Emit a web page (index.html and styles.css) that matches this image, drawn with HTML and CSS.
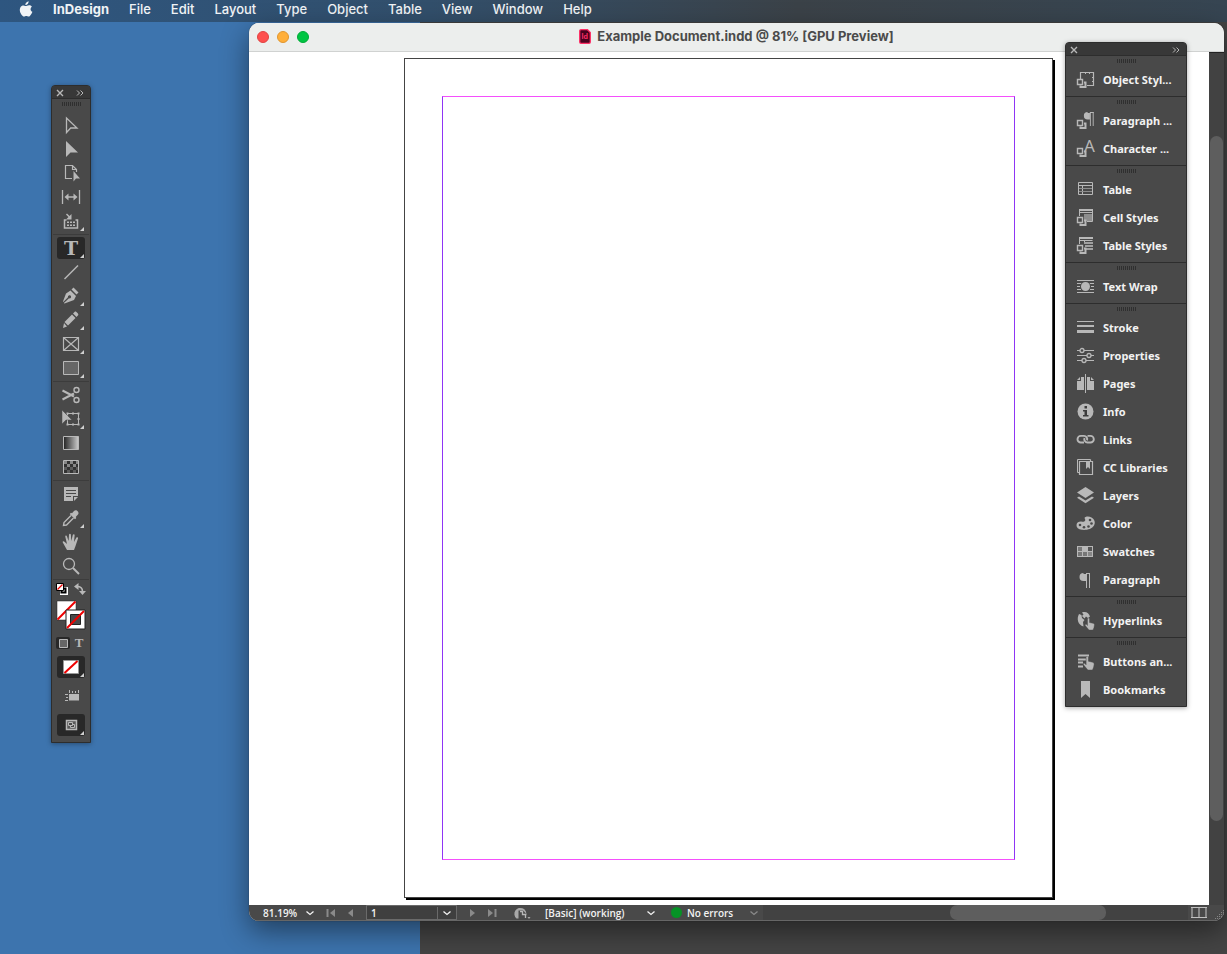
FILE: index.html
```html
<!DOCTYPE html>
<html lang="en">
<head>
    <meta charset="utf-8">
    <title>InDesign</title>
    <link rel="stylesheet" href="styles.css">
</head>
<body>
    <svg class="sprite" aria-hidden="true">
        <symbol id="badge" viewBox="0 0 20 20">
            <path d="M1.5 9.5h5v5h-5z" fill="#494949" stroke="#b8b8b8" stroke-width="1.4"/>
            <path d="M8 12.5h1.5v4.500h-5v-1.500" fill="none" stroke="#b8b8b8" stroke-width="2"/>
        </symbol>
        <symbol id="chevron" viewBox="0 0 10 10">
            <path d="M1.500 3.500l3.500 3 3.500-3" fill="none" stroke="currentColor" stroke-width="1.300"/>
        </symbol>
        <symbol id="close" viewBox="0 0 8 8">
            <path d="M1 1l6 6M7 1l-6 6" fill="none" stroke="currentColor" stroke-width="1.400"/>
        </symbol>
        <symbol id="collapse" viewBox="0 0 8 8">
            <path d="M1 1.500l2.500 2.500-2.500 2.500M4.500 1.500l2.500 2.500-2.500 2.500" fill="none" stroke="currentColor"/>
        </symbol>
        <symbol id="pilcrow" viewBox="0 0 12 15">
            <path d="M4.500 0H11v1H4.500zM4.500 0a4 4 0 0 0 0 8H7V0z" fill="currentColor"/>
            <path d="M7.500 0v15M10.500 0v15" stroke="currentColor"/>
        </symbol>
        <symbol id="hand" viewBox="0 0 10 12">
            <path d="M2.500 1c0-1.300 2-1.300 2 0v3.500l3.500.8c1 .3 1.500.8 1.400 1.800L9 9.500 8 12H4L.3 7.600c-.6-1 .6-1.800 1.300-1l.9.9z" fill="currentColor" stroke="#494949" stroke-width=".4"/>
        </symbol>
    </svg>

    <nav class="menubar">
        <a class="apple" href="#" aria-label="Apple">
            <svg width="14" height="17" viewBox="0 0 14 17"><path d="M9.600.3c.1 1.200-.4 2.100-1 2.800-.6.7-1.400 1.100-2.200 1C6.300 3 6.800 2.100 7.400 1.500 8 .8 8.900.4 9.600.3zM12.900 5.700c-1.900 1.200-1.700 4.200.5 5.100-.5 1.500-1.500 3.200-2.500 4.200-.9.8-1.700.6-2.400.3-.8-.4-1.500-.4-2.400 0-1 .5-1.700.4-2.400-.3C.3 11.700-.2 6.900 2.700 5c1.500-.9 2.600-.5 3.500-.1.600.3 1 .2 1.700-.1 1.800-.8 3.800-.7 5 .9z" fill="currentColor"/></svg>
        </a>
        <a class="app-name" href="#">InDesign</a>
        <a href="#">File</a>
        <a href="#">Edit</a>
        <a href="#">Layout</a>
        <a href="#">Type</a>
        <a href="#">Object</a>
        <a href="#">Table</a>
        <a href="#">View</a>
        <a href="#">Window</a>
        <a href="#">Help</a>
    </nav>

    <main class="window">
        <header class="titlebar">
            <div class="lights">
                <button class="light red" aria-label="Close"></button>
                <button class="light yellow" aria-label="Minimize"></button>
                <button class="light green" aria-label="Zoom"></button>
            </div>
            <h1 class="doc-title">
                <svg width="12" height="15" viewBox="0 0 12 15"><path d="M2 .7h6.500l2.800 2.800V13a1.300 1.300 0 0 1-1.300 1.300H2A1.300 1.300 0 0 1 .7 13V2A1.300 1.300 0 0 1 2 .7z" fill="#49021f" stroke="#ff2e66" stroke-width="1.300"/><text x="2.500" y="10" class="id-mark">Id</text></svg>
                Example Document.indd @ 81% [GPU Preview]
            </h1>
        </header>
        <div class="workspace">
            <div class="canvas">
                <div class="page"><div class="page-margins"></div></div>
            </div>
            <div class="v-scroll"><div class="v-thumb"></div></div>
        </div>
        <footer class="statusbar">
            <div class="status-controls">
                <div class="zoom">
                    <select aria-label="Zoom level"><option>81.19%</option></select>
                    <svg width="10" height="10"><use href="#chevron"/></svg>
                </div>
                <div class="pager">
                    <button class="dim" aria-label="First page"><svg width="10" height="10"><path d="M1.500 1v8" stroke="currentColor" stroke-width="2"/><path d="M9 1v8L4 5z" fill="currentColor"/></svg></button>
                    <button class="dim" aria-label="Previous page"><svg width="10" height="10"><path d="M7 1v8L2 5z" fill="currentColor"/></svg></button>
                    <div class="page-field">
                        <input type="text" value="1" aria-label="Page">
                        <button aria-label="Page list"><svg width="10" height="10"><use href="#chevron"/></svg></button>
                    </div>
                    <button class="dim" aria-label="Next page"><svg width="10" height="10"><path d="M3 1v8l5-4z" fill="currentColor"/></svg></button>
                    <button class="dim" aria-label="Last page"><svg width="10" height="10"><path d="M1 1v8l5-4z" fill="currentColor"/><path d="M8.500 1v8" stroke="currentColor" stroke-width="2"/></svg></button>
                </div>
                <button class="open-as" aria-label="Open"><svg width="18" height="14" viewBox="0 0 18 14"><path d="M6 12.500H3.500A6 6 0 1 1 13 10" fill="#a8a8a8"/><path d="M3.800 11.500A5 5 0 1 1 12.500 9" fill="none" stroke="#a8a8a8" stroke-width="1.500"/><path d="M5.500 4.500h4.500l3 3V13H5.500z" fill="#494949"/><path d="M7 5.500h2.500v3h3v3.500" fill="none" stroke="#b8b8b8" stroke-width="1.300"/><path d="M14.500 11h3L16 13z" fill="#a8a8a8"/></svg></button>
                <div class="profile">
                    <select aria-label="Preflight profile"><option>[Basic] (working)</option></select>
                    <svg width="10" height="10"><use href="#chevron"/></svg>
                </div>
                <div class="errors">
                    <span class="dot"></span>
                    <span class="errors-text">No errors</span>
                    <button class="dim" aria-label="Preflight menu"><svg width="10" height="10"><use href="#chevron"/></svg></button>
                </div>
            </div>
            <div class="h-scroll"><div class="h-thumb"></div></div>
            <button class="split" aria-label="Split layout"><svg width="16" height="11" viewBox="0 0 16 11"><path d="M1 .5v10M8 .5v10M15 .5v10" stroke="#888" stroke-width="2"/><path d="M0 .5h16M0 10.500h16" stroke="#c0c0c0"/></svg></button>
            <svg class="resize" width="11" height="11" viewBox="0 0 11 11"><path d="M10.500 1v10M8.500 3v8M6.500 5v6M4.500 7v4M2.500 9v2" stroke="#858585" stroke-dasharray="1 1"/></svg>
        </footer>
    </main>

    <aside class="tools">
        <div class="panel-head">
            <button aria-label="Close tools"><svg width="8" height="8"><use href="#close"/></svg></button>
            <button aria-label="Expand tools"><svg width="8" height="8"><use href="#collapse"/></svg></button>
        </div>
        <div class="grip"></div>
        <div class="tool-group">
            <button class="tool" aria-label="Selection"><svg width="20" height="20"><path d="M5.500 3v14.500l4.200-4.500h6.300z" fill="none" stroke="currentColor" stroke-width="1.300"/></svg></button>
            <button class="tool" aria-label="Direct Selection"><svg width="20" height="20"><path d="M5 2v16l4.500-4.500H17z" fill="currentColor"/></svg></button>
            <button class="tool" aria-label="Page"><svg width="20" height="20"><path d="M11 15.500H4.500v-13h7l4 4V9M11.500 2.500v4h4" fill="none" stroke="currentColor" stroke-width="1.200"/><path d="M12.500 8v10.500l2.500-3h4z" fill="currentColor"/></svg></button>
            <button class="tool" aria-label="Gap"><svg width="20" height="20"><path d="M1.500 3v14M18.500 3v14" stroke="currentColor" stroke-width="1.300"/><path d="M5 10h10" stroke="currentColor" stroke-width="1.500"/><path d="M7.500 6.500v7L3.500 10zM12.500 6.500v7l4-3.500z" fill="currentColor"/></svg></button>
            <button class="tool more" aria-label="Content Collector"><svg width="20" height="20"><path d="M5.500 9h-2v8h13V9h-2" fill="none" stroke="currentColor" stroke-width="1.500"/><path d="M6 10.500h2V12H6zM9 10.500h2V12H9zM12 10.500h2V12h-2zM6 13.500h2V15H6zM9 13.500h2V15H9zM12 13.500h2V15h-2zM10.500 3v5.500H5z" fill="currentColor"/><path d="M5.500 3l3.500 3.500" stroke="currentColor" stroke-width="1.500"/></svg></button>
        </div>
        <div class="tool-group">
            <button class="tool more active" aria-label="Type"><span class="type-mark">T</span></button>
            <button class="tool" aria-label="Line"><svg width="20" height="20"><path d="M3.500 17L17 3.500" stroke="currentColor" stroke-width="1.500"/></svg></button>
            <button class="tool more" aria-label="Pen"><svg width="20" height="20"><path d="M12.500 1.500l5 5-2 2-5-5z" fill="currentColor"/><path d="M9.500 4.500l5.500 5.500-2 4-9.500 3.500-.6-.6L8 12.300a1.600 1.600 0 1 0-1-1L2.300 16l-.3-.5L5 7.500z" fill="currentColor"/></svg></button>
            <button class="tool more" aria-label="Pencil"><svg width="20" height="20"><path d="M14 1.500c1-.7 4 2.500 3.300 3.500L15.500 7 12 3.500zM11 4.500L14.500 8l-7.500 7.500L3.500 12zM3 13l3 3.500-4 1.500z" fill="currentColor"/></svg></button>
            <button class="tool more" aria-label="Rectangle Frame"><svg width="20" height="20"><path d="M2.500 3.500h15v13h-15zM2.500 3.500l15 13M17.500 3.500l-15 13" fill="none" stroke="currentColor" stroke-width="1.200"/></svg></button>
            <button class="tool more" aria-label="Rectangle"><svg width="20" height="20"><path d="M2.500 3.500h15v13h-15z" fill="#666" stroke="currentColor"/></svg></button>
        </div>
        <div class="tool-group">
            <button class="tool" aria-label="Scissors"><svg width="20" height="20"><path d="M1.500 5.500L13 11.500M1.500 14.500L13 8.500" stroke="currentColor" stroke-width="2"/><circle cx="15.500" cy="5" r="2.500" fill="none" stroke="currentColor" stroke-width="1.400"/><circle cx="15.500" cy="15" r="2.500" fill="none" stroke="currentColor" stroke-width="1.400"/></svg></button>
            <button class="tool more" aria-label="Free Transform"><svg width="20" height="20"><path d="M6.500 4.500h11v11h-11z" fill="none" stroke="currentColor"/><path d="M5.500 3.500h2v2h-2zM11 3.500h2v2h-2zM16.500 3.500h2v2h-2zM5.500 14.500h2v2h-2zM11 14.500h2v2h-2zM16.500 14.500h2v2h-2zM16.500 9h2v2h-2z" fill="currentColor"/><path d="M1 1v14l4-4h6z" fill="#b8b8b8" stroke="#494949" stroke-width=".5"/></svg></button>
            <button class="tool" aria-label="Gradient Swatch"><svg width="20" height="20"><defs><linearGradient id="fade"><stop stop-color="#222"/><stop offset="1" stop-color="#ccc"/></linearGradient></defs><path d="M2.500 3.500h15v13h-15z" fill="url(#fade)" stroke="currentColor"/></svg></button>
            <button class="tool" aria-label="Gradient Feather"><svg width="20" height="20"><path d="M2.500 3.500h15v13h-15z" fill="#333" stroke="currentColor"/><path d="M3 4h3v3H3zM9 4h3v3H9zM15 4h2v3h-2zM6 7h3v3H6zM12 7h3v3h-3z" fill="#888"/><path d="M3 10h3v3H3zM9 10h3v3H9zM15 10h2v3h-2zM6 13h3v3H6zM12 13h3v3h-3z" fill="#5c5c5c"/></svg></button>
        </div>
        <div class="tool-group">
            <button class="tool" aria-label="Note"><svg width="20" height="20"><path d="M3 3h14v9h-5v5H3zM13 13h4l-4 4z" fill="currentColor"/><path d="M5 6.500h10M5 9.500h10M5 12.500h5" stroke="#494949"/></svg></button>
            <button class="tool more" aria-label="Eyedropper"><svg width="20" height="20"><path d="M13 3c2-2.500 6 1 4 3.500L14.700 9l.6 1-1.300 1.300L8.700 6 10 4.700l1 .6z" fill="currentColor"/><path d="M10 7.500l-7 7-.5 3 3-.5 7-7" fill="none" stroke="currentColor" stroke-width="1.400"/></svg></button>
            <button class="tool" aria-label="Hand"><svg width="20" height="20"><path d="M6 18L1.800 10.500c-.5-1.300.9-1.600 1.700-.7L6 12 4.300 4.800c-.2-1.400 1.400-1.600 1.700-.4L7.600 9 8 2.700c.1-1.300 1.800-1.300 1.900 0L10.300 9l1.500-6c.4-1.200 2-.8 1.800.5L13 10l2.300-4.300c.7-1 2.200-.4 1.700.9L14.500 14 13 18z" fill="currentColor"/></svg></button>
            <button class="tool" aria-label="Zoom"><svg width="20" height="20"><circle cx="8" cy="8" r="5.500" fill="none" stroke="currentColor" stroke-width="1.300"/><path d="M12 12l6 6" stroke="currentColor" stroke-width="2"/></svg></button>
        </div>
        <div class="swatch-row">
            <button aria-label="Default fill and stroke"><svg width="12" height="12"><path d="M5.500 5.500h5v5h-5z" fill="#fff" stroke="#fff" stroke-width="3"/><path d="M5.500 5.500h4v4h-4z" fill="#fff" stroke="#000" stroke-width="2"/><path d="M.5.5h7v7h-7z" fill="#fff" stroke="#000"/><path d="M1.500 6.500l5-5" stroke="#e00" stroke-width="1.200"/></svg></button>
            <button aria-label="Swap fill and stroke"><svg width="12" height="12"><path d="M3 3.500c4 0 5.500 1.500 5.500 5" fill="none" stroke="currentColor" stroke-width="1.600"/><path d="M4.500 0v7L0 3.500zM5 8h7l-3.500 4z" fill="currentColor"/></svg></button>
        </div>
        <button class="fill-stroke" aria-label="Fill and stroke"><svg width="30" height="30"><path d="M1 1h19v19H1z" fill="#fff" stroke="#222" stroke-width=".5"/><path d="M1.500 19.500l18-18" stroke="#e00" stroke-width="2"/><path d="M10 10h19v19H10z" fill="#fff" stroke="#222"/><path d="M14.500 14.500h10v10h-10z" fill="#494949" stroke="#222"/><path d="M11 28l17-17" stroke="#e00" stroke-width="2"/></svg></button>
        <div class="format-row">
            <button class="format active" aria-label="Formatting affects container"><svg width="9" height="9"><path d="M.5.5h8v8h-8z" fill="#666" stroke="currentColor"/></svg></button>
            <button class="format" aria-label="Formatting affects text"><span class="text-mark">T</span></button>
        </div>
        <div class="modes">
            <button class="tool more active" aria-label="Apply None"><svg width="20" height="20"><path d="M2.500 3.500h15v13h-15z" fill="#fff" stroke="#999"/><path d="M3.500 16L16.500 4" stroke="#e00" stroke-width="2"/></svg></button>
            <button class="tool" aria-label="View Options"><svg width="20" height="20"><path d="M8 9h10v6.500H8z" fill="currentColor"/><path d="M8.500 5v3M11.500 6v2M14.500 6v2M17.500 5v3M4 9.500h3M5 12.500h2M4 15.500h3" stroke="currentColor"/></svg></button>
        </div>
        <button class="tool more active" aria-label="Screen Mode"><svg width="20" height="20"><path d="M5.500 5.500h10v9h-10z" fill="#5a5a5a" stroke="currentColor" stroke-width="1.500"/><path d="M9.500 9.500h4v3h-4z" fill="#494949" stroke="currentColor"/><path d="M7.500 7.500h4v3h-4z" fill="#494949" stroke="currentColor"/></svg></button>
    </aside>

    <aside class="panels">
        <div class="panel-head">
            <button aria-label="Close panels"><svg width="8" height="8"><use href="#close"/></svg></button>
            <button aria-label="Expand panels"><svg width="8" height="8"><use href="#collapse"/></svg></button>
        </div>
        <section class="panel-group">
            <div class="grip"></div>
            <button class="panel-item"><svg width="20" height="20"><path d="M4.500 9V2.500h13v13H11" fill="none" stroke="currentColor" stroke-width="1.200"/><path d="M9 3.500h1M13 3.500h1M16 7.500h1M16 11.500h1" stroke="currentColor"/><use href="#badge"/></svg><span>Object Styl...</span></button>
        </section>
        <section class="panel-group">
            <div class="grip"></div>
            <button class="panel-item"><svg width="20" height="20"><use href="#pilcrow" x="7" y="1" width="12" height="14"/><use href="#badge"/></svg><span>Paragraph ...</span></button>
            <button class="panel-item"><svg width="20" height="20"><text x="8" y="13" class="char-mark">A</text><use href="#badge"/></svg><span>Character ...</span></button>
        </section>
        <section class="panel-group">
            <div class="grip"></div>
            <button class="panel-item"><svg width="20" height="20"><path d="M2.500 2.500h14v12h-14zM2.500 5.500h14M6.500 5.500v9" fill="none" stroke="currentColor"/><path d="M3 8.500h13M3 11.500h13" stroke="#8d8d8d"/></svg><span>Table</span></button>
            <button class="panel-item"><svg width="20" height="20"><path d="M3.500 8V1.500h13v12H11M3.500 4.500h13" fill="none" stroke="currentColor"/><path d="M3 1h14v2H3z" fill="currentColor"/><path d="M8 6h8v7H8z" fill="#8d8d8d"/><use href="#badge"/></svg><span>Cell Styles</span></button>
            <button class="panel-item"><svg width="20" height="20"><path d="M3.500 8V1.500h13M3.500 4.500h13M8.500 4v4" fill="none" stroke="currentColor"/><path d="M3 1h14v2H3z" fill="currentColor"/><path d="M8 7h9M9 10h8M10 13h7" stroke="#a0a0a0" stroke-width="2"/><use href="#badge"/></svg><span>Table Styles</span></button>
        </section>
        <section class="panel-group">
            <div class="grip"></div>
            <button class="panel-item"><svg width="20" height="20"><path d="M1 3.500h17M1 6.500h4M14 6.500h4M1 9.500h3M15 9.500h3M1 12.500h4M14 12.500h4M1 15.500h17" stroke="currentColor"/><circle cx="9.500" cy="9.500" r="4.500" fill="currentColor"/></svg><span>Text Wrap</span></button>
        </section>
        <section class="panel-group">
            <div class="grip"></div>
            <button class="panel-item"><svg width="20" height="20"><path d="M1 3h17v1H1zM1 7h17v2H1zM1 12h17v3H1z" fill="currentColor"/></svg><span>Stroke</span></button>
            <button class="panel-item"><svg width="20" height="20"><path d="M1 4.500h17M1 9.500h17M1 14.500h17" stroke="currentColor"/><g fill="#494949" stroke="currentColor" stroke-width="1.300"><circle cx="6" cy="4.500" r="2"/><circle cx="13" cy="9.500" r="2"/><circle cx="8" cy="14.500" r="2"/></g></svg><span>Properties</span></button>
            <button class="panel-item"><svg width="20" height="20"><path d="M1 7h4V3h3v13H1zM11 3h3v4h4v9h-7zM1 6l3-3v3zM15 3l3 3h-3z" fill="currentColor"/><path d="M9.500 0v19" stroke="currentColor"/></svg><span>Pages</span></button>
            <button class="panel-item"><svg width="20" height="20"><circle cx="9.500" cy="9.500" r="8" fill="currentColor"/><path d="M8.500 4H11v2.500H8.500zM7 8h4v5h1.500v1.500H7V13h1.500V9.500H7z" fill="#3c3c3c"/></svg><span>Info</span></button>
            <button class="panel-item"><svg width="20" height="20"><path d="M8 12.500H4.800a3.300 3.300 0 0 1 0-6.600H8a3.300 3.300 0 0 1 3 4.500M11.500 5.900h3a3.300 3.300 0 0 1 0 6.600h-3A3.300 3.300 0 0 1 8.500 8" fill="none" stroke="currentColor" stroke-width="1.900"/></svg><span>Links</span></button>
            <button class="panel-item"><svg width="20" height="20"><path d="M1.500 14.500v-13h13" fill="none" stroke="currentColor"/><path d="M3.500 3.500h13v13h-13zM1.500 14.500h2M14.500 1.500v2" fill="none" stroke="currentColor" stroke-width="1.200"/><path d="M10 4h4v7l-2-2-2 2z" fill="currentColor"/></svg><span>CC Libraries</span></button>
            <button class="panel-item"><svg width="20" height="20"><path d="M9.500 1l8.500 5.500-8.500 5.500L1 6.500zM3 10.500l6.500 4 6.500-4 2 1.200-8.500 5.500L1 11.700z" fill="currentColor"/></svg><span>Layers</span></button>
            <button class="panel-item"><svg width="20" height="20"><path d="M8.500 4c.8-2 4.500-2 7-.5 3 1.700 4.200 5 2.500 8-2 3.800-7.500 4.700-12 4.300C2.300 15.300.3 13.500.5 11c.3-2.800 3-3.700 5.500-3.300 2.300.4 4.500-.7 2.500-3.700z" fill="currentColor"/><g fill="#494949"><circle cx="4" cy="11" r="1.300"/><circle cx="8" cy="13.300" r="1.300"/><circle cx="12.500" cy="12.500" r="1.300"/><circle cx="15.500" cy="9.500" r="1.300"/><circle cx="14" cy="6" r="1.300"/></g></svg><span>Color</span></button>
            <button class="panel-item"><svg width="20" height="20"><path d="M1 4h16v11H1z" fill="currentColor"/><path d="M2 5h4v4H2zM2 10h4v4H2zM7 10h4v4H7z" fill="#777"/><path d="M12 5h4v4h-4z" fill="#555"/><path d="M12 10h4v4h-4z" fill="#888"/></svg><span>Swatches</span></button>
            <button class="panel-item"><svg width="20" height="20"><use href="#pilcrow" x="3" y="3" width="12" height="15"/></svg><span>Paragraph</span></button>
        </section>
        <section class="panel-group">
            <div class="grip"></div>
            <button class="panel-item"><svg width="20" height="20"><path d="M3 3l2.500 1 .5 3 2.500 2L7 11l.5 4.500C2 14 .3 8 3 3zM6 1.500c4-1.500 7 .8 8 4l-2 1.500-2-1.500-1.500 2L6 5l1.500-1.500z" fill="currentColor"/><use href="#hand" x="9" y="7" width="10" height="12"/></svg><span>Hyperlinks</span></button>
        </section>
        <section class="panel-group">
            <div class="grip"></div>
            <button class="panel-item"><svg width="20" height="20"><path d="M2 3.500h11M2 7.500h8M2 10.500h5M2 14.500h5" stroke="currentColor" stroke-width="2"/><use href="#hand" x="7" y="4" width="12" height="14"/></svg><span>Buttons an...</span></button>
            <button class="panel-item"><svg width="20" height="20"><path d="M5 1h9v17l-4.500-4L5 18z" fill="currentColor"/></svg><span>Bookmarks</span></button>
        </section>
    </aside>
</body>
</html>
```

FILE: styles.css
```css
* {
    box-sizing: border-box;
}

body {
    margin: 0;
    height: 100vh;
    overflow: hidden;
    position: relative;
    background: linear-gradient(to right, #3d74ae 420px, #444 420px);
    font-family: Inter, 'Liberation Sans', sans-serif;
    font-size: 13px;
}

button, input, select {
    font: inherit;
    color: inherit;
    background: none;
    border: 0;
    padding: 0;
    margin: 0;
    appearance: none;
}

svg {
    display: block;
    flex: none;
    overflow: visible;
}

.sprite {
    position: absolute;
    width: 0;
    height: 0;
    overflow: hidden;
}

/* menu bar */

.menubar {
    display: flex;
    align-items: center;
    gap: 20px;
    height: 22px;
    padding: 0 19px 4px;
    background: linear-gradient(to right, #2e5680, #324f6b 35%, #3b4248 65%, #364552);
    color: #f0f3f6;
    font-weight: 500;
}

.menubar a {
    color: inherit;
    text-decoration: none;
}

.menubar .app-name {
    font-weight: 700;
}

/* document window */

.window {
    position: absolute;
    top: 23px;
    left: 249px;
    right: 3px;
    bottom: 33px;
    display: flex;
    flex-direction: column;
    border-radius: 10px;
    overflow: hidden;
    background: #fff;
    box-shadow: 0 10px 28px rgba(0, 0, 0, 0.45), 0 0 1px #222;
}

.titlebar {
    display: grid;
    grid-template-columns: 1fr auto 1fr;
    align-items: center;
    height: 29px;
    padding: 0 8px;
    background: #eceeed;
    border-bottom: 1px solid #d0d2d1;
}

.lights {
    display: flex;
    gap: 8px;
}

.light {
    width: 12px;
    height: 12px;
    border-radius: 50%;
}

.red {
    background: #fe4f4e;
    border: 1px solid #e04343;
}

.yellow {
    background: #ffaf3a;
    border: 1px solid #e0962f;
}

.green {
    background: #00c543;
    border: 1px solid #00ab38;
}

.doc-title {
    display: flex;
    align-items: center;
    gap: 6px;
    margin: 0;
    padding-bottom: 2px;
    font-size: 13px;
    font-weight: 700;
    color: #4b4b4b;
}

.id-mark {
    font-size: 7px;
    font-weight: 700;
    fill: #ff2e66;
}

.workspace {
    flex: 1;
    display: flex;
    min-height: 0;
}

.canvas {
    flex: 1;
    display: flex;
    padding: 6px 156px 7px 155px;
}

.page {
    flex: 1;
    padding: 37px;
    border: 1px solid #444;
    box-shadow: 2px 2px 0 #000;
    background: #fff;
}

.page-margins {
    height: 100%;
    border: 1px solid;
    border-color: #f44ffc #8f35f5;
}

.v-scroll {
    width: 15px;
    padding: 83px 1px 84px;
    background: #424242;
    border-top: 1px solid #222;
}

.v-thumb {
    height: 100%;
    border-radius: 7px;
    background: #5e5e5e;
}

.statusbar {
    display: flex;
    height: 16px;
    background: #494949;
    border-bottom: 1px solid #666;
    color: #f2f2f2;
    font-family: 'Open Sans', 'Noto Sans', sans-serif;
    font-size: 10px;
    font-weight: 600;
    line-height: 14px;
}

.status-controls {
    display: flex;
    align-items: center;
    width: 514px;
    padding-left: 14px;
}

.zoom, .profile, .errors, .pager, .page-field {
    display: flex;
    align-items: center;
}

.zoom select {
    width: 42px;
}

.pager {
    gap: 10px;
    margin-left: 11px;
}

.dim {
    color: #8a8a8a;
}

.page-field {
    height: 15px;
    border: 1px solid #6a6a6a;
    background: #3f3f3f;
}

.page-field input {
    width: 70px;
    padding-left: 4px;
}

.page-field button {
    padding: 1px 4px;
    border-left: 1px solid #6a6a6a;
}

.open-as {
    margin: 0 14px 0 16px;
}

.profile select {
    width: 101px;
}

.errors {
    margin-left: 15px;
}

.dot {
    width: 11px;
    height: 11px;
    margin-right: 5px;
    border-radius: 50%;
    background: #069226;
}

.errors-text {
    width: 62px;
}

.h-scroll {
    flex: 1;
    padding: 0 82px 0 187px;
    background: #424242;
}

.h-thumb {
    height: 15px;
    border-radius: 7px;
    background: #5e5e5e;
}

.split {
    padding: 0 5px 0 3px;
}

.resize {
    align-self: flex-end;
    margin-left: 1px;
}

/* floating panels */

.tools, .panels {
    position: absolute;
    display: flex;
    flex-direction: column;
    background: #494949;
    border: 1px solid #2d2d2d;
    border-radius: 4px 4px 0 0;
    color: #b8b8b8;
    box-shadow: 0 1px 5px rgba(0, 0, 0, 0.35);
}

.panel-head {
    display: flex;
    justify-content: space-between;
    align-items: center;
    height: 13px;
    padding: 2px 6px 0 4px;
    background: #383838;
    border-bottom: 1px solid #2d2d2d;
    border-radius: 3px 3px 0 0;
}

.grip {
    height: 10px;
    background: repeating-linear-gradient(to right, #2f2f2f 0 1px, transparent 1px 2px) center 3px / 19px 4px no-repeat;
}

.tools {
    top: 85px;
    left: 51px;
    width: 40px;
    align-items: center;
    padding-bottom: 6px;
}

.tools .panel-head {
    align-self: stretch;
}

.tools .grip {
    width: 20px;
    height: 12px;
    margin-bottom: 2px;
}

.tool-group {
    display: grid;
    gap: 2px;
    margin-bottom: 1px;
    padding: 1px 4px 2px;
    border-bottom: 1px solid #3c3c3c;
}

.tool {
    position: relative;
    display: flex;
    justify-content: center;
    align-items: center;
    width: 28px;
    height: 22px;
    border-radius: 3px;
}

.active {
    background: #282828;
}

.more::after {
    content: '';
    position: absolute;
    right: 1px;
    bottom: 1px;
    border: 2px solid;
    border-color: transparent #d0d0d0 #d0d0d0 transparent;
}

.type-mark {
    font-family: 'DejaVu Serif', serif;
    font-size: 19px;
    font-weight: 700;
    line-height: 20px;
}

.text-mark {
    font-family: 'Liberation Serif', serif;
    font-size: 13px;
    font-weight: 700;
    line-height: 14px;
}

.swatch-row, .format-row {
    display: flex;
    align-items: center;
    justify-content: space-between;
    width: 30px;
    height: 16px;
}

.fill-stroke {
    margin: 3px 0 6px;
}

.format-row {
    width: 30px;
    height: 14px;
    margin-bottom: 6px;
}

.format {
    display: flex;
    align-items: center;
    justify-content: center;
    width: 14px;
    height: 12px;
    border-radius: 2px;
}

.modes {
    display: grid;
    gap: 6px;
    margin-bottom: 8px;
}

.panels {
    top: 42px;
    right: 40px;
    width: 122px;
}

.panel-group {
    padding-bottom: 2px;
    border-bottom: 1px solid #2d2d2d;
}

.panel-group:last-child {
    border-bottom: 0;
}

.panel-item {
    display: flex;
    align-items: center;
    gap: 7px;
    width: 100%;
    height: 28px;
    padding-left: 10px;
    font-family: 'Noto Sans', 'Open Sans', sans-serif;
    font-size: 11px;
    font-weight: 700;
    color: #f2f2f2;
    white-space: nowrap;
}

.panel-item span {
    padding-bottom: 2px;
}

.panel-item svg {
    color: #b8b8b8;
}

.char-mark {
    font-size: 17px;
    font-weight: 400;
    fill: #b8b8b8;
}
```
